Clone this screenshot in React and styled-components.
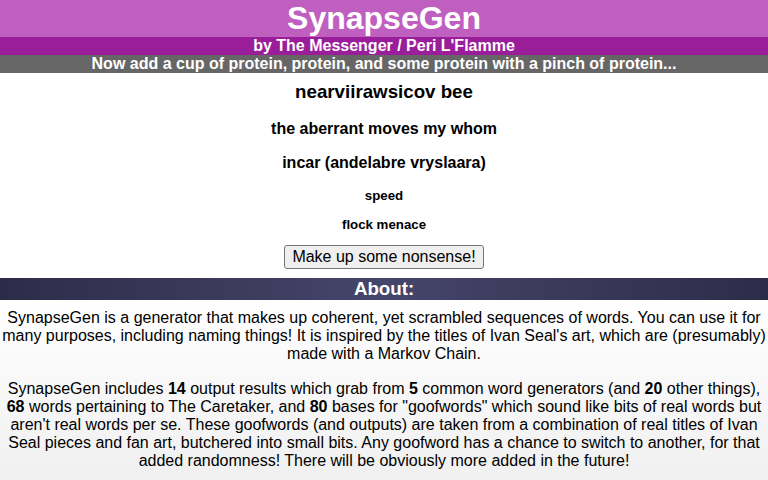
import React from "react";
import styled, { createGlobalStyle } from "styled-components";

const Global = createGlobalStyle`
  html, body { margin: 0; padding: 0; background: #fff; }
  body { font-family: "Liberation Sans", Arial, sans-serif; color: #000; }
`;

const Page = styled.div`
  display: flex;
  flex-direction: column;
  text-align: center;
`;

const Band = styled.div`
  background: ${(p) => p.$bg};
  color: #fff;
  font-weight: bold;
  font-size: ${(p) => p.$size}px;
  line-height: ${(p) => p.$lh}px;
  margin: 0;
`;

const Generator = styled.section`
  display: flex;
  flex-direction: column;
  align-items: center;
  padding: 8px 0 9px;
`;

const Result = styled.div`
  font-weight: bold;
  font-size: ${(p) => p.$size}px;
  line-height: ${(p) => p.$lh}px;
  margin-top: ${(p) => p.$mt}px;
`;

const Button = styled.button`
  margin-top: 13px;
  font-family: "Liberation Sans", Arial, sans-serif;
  font-size: 16px;
  line-height: 18px;
  padding: 1px 7px;
  background: #efefef;
  color: #000;
  border: 1px solid #767676;
  border-radius: 3px;
  height: 24px;
`;

const AboutHeader = styled.h3`
  margin: 0;
  color: #fff;
  font-size: 18.72px;
  line-height: 22px;
  background: linear-gradient(to right, #2d2c48, #46456b 50%, #2d2c48);
`;

const About = styled.section`
  background: linear-gradient(to bottom, #ffffff, #f0f0f0 180px);
  padding: 9px 2px 0;
  min-height: 200px;
  font-size: 16px;
  line-height: 18.2px;
`;

const Para = styled.p`
  margin: 0 0 16px;
`;

export default function App() {
  return (
    <Page>
      <Global />
      <Band $bg="#bf5fbf" $size={32} $lh={37}>SynapseGen</Band>
      <Band $bg="#9a1e9a" $size={16} $lh={18}>by The Messenger / Peri L'Flamme</Band>
      <Band $bg="#666666" $size={16} $lh={18}>
        Now add a cup of protein, protein, and some protein with a pinch of protein...
      </Band>
      <Generator>
        <Result $size={18.72} $lh={22} $mt={0}>nearviirawsicov bee</Result>
        <Result $size={16} $lh={18} $mt={17}>the aberrant moves my whom</Result>
        <Result $size={16} $lh={18} $mt={16}>incar (andelabre vryslaara)</Result>
        <Result $size={13.28} $lh={15} $mt={16}>speed</Result>
        <Result $size={13.28} $lh={15} $mt={14}>flock menace</Result>
        <Button>Make up some nonsense!</Button>
      </Generator>
      <AboutHeader>About:</AboutHeader>
      <About>
        <Para>
          SynapseGen is a generator that makes up coherent, yet scrambled sequences of words. You can use it for many purposes, including naming things! It is inspired by the titles of Ivan Seal's art, which are (presumably) made with a Markov Chain.
        </Para>
        <Para>
          SynapseGen includes <b>14</b> output results which grab from <b>5</b> common word generators (and <b>20</b> other things), <b>68</b> words pertaining to The Caretaker, and <b>80</b> bases for "goofwords" which sound like bits of real words but aren't real words per se. These goofwords (and outputs) are taken from a combination of real titles of Ivan Seal pieces and fan art, butchered into small bits. Any goofword has a chance to switch to another, for that added randomness! There will be obviously more added in the future!
        </Para>
      </About>
    </Page>
  );
}
